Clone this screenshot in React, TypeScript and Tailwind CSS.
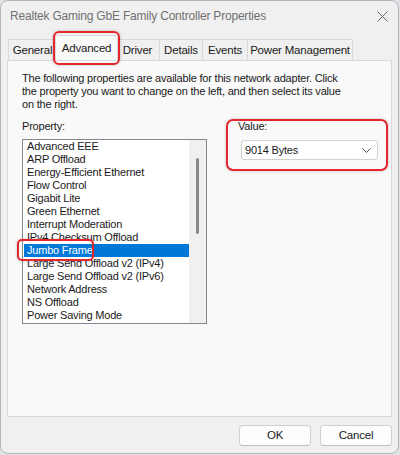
import React from "react";

const items = [
  "Advanced EEE",
  "ARP Offload",
  "Energy-Efficient Ethernet",
  "Flow Control",
  "Gigabit Lite",
  "Green Ethernet",
  "Interrupt Moderation",
  "IPv4 Checksum Offload",
  "Jumbo Frame",
  "Large Send Offload v2 (IPv4)",
  "Large Send Offload v2 (IPv6)",
  "Network Address",
  "NS Offload",
  "Power Saving Mode",
];

function Tab({ label, w, selected }: { label: string; w: string; selected?: boolean }) {
  if (selected) {
    return (
      <div className="relative -mx-[2px] z-10 flex h-[25px] w-[63px] items-start justify-center border border-b-0 border-[#d9d9d9] bg-[#f9f9f9] pt-[4px] text-[11.5px] tracking-[-0.2px] text-[#1a1a1a]">
        {label}
        <div className="pointer-events-none absolute -left-[3px] -top-[5px] h-[34px] w-[67px] rounded-[6px] border-2 border-[#e5262d] shadow-[0_0_3px_rgba(0,0,0,0.25)]" />
      </div>
    );
  }
  return (
    <div className={`-ml-px flex h-[21px] ${w} items-center justify-center border border-b-0 border-[#d9d9d9] bg-[#f0f0f0] pt-[1px] text-[11.5px] tracking-[-0.2px] text-[#1a1a1a]`}>
      {label}
    </div>
  );
}

export default function App() {
  return (
    <div
      className="h-[455px] w-[400px] bg-[#dfe3e8]"
      style={{ fontFamily: '"Liberation Sans", Arial, sans-serif' }}
    >
      <div className="flex h-[454px] w-[399px] flex-col overflow-hidden rounded-[8px] border border-[#b5b5b5] bg-[#f0f0f0]">
        {/* Title bar */}
        <div className="flex h-[30px] items-center justify-between pl-[9px] pr-[9px]">
          <span className="text-[12px] tracking-[-0.2px] text-[#707070]">Realtek Gaming GbE Family Controller Properties</span>
          <svg width="11" height="11" viewBox="0 0 11 11" className="mr-[1px]">
            <path d="M0.5 0.5 L10.5 10.5 M10.5 0.5 L0.5 10.5" stroke="#6a6a6a" strokeWidth="1" fill="none" />
          </svg>
        </div>

        {/* Tabs */}
        <div className="flex h-[29px] items-end pl-[8px]">
          <Tab label="General" w="w-[49px]" />
          <Tab label="Advanced" w="" selected />
          <Tab label="Driver" w="w-[45px]" />
          <Tab label="Details" w="w-[44px]" />
          <Tab label="Events" w="w-[46px]" />
          <Tab label="Power Management" w="w-[106px]" />
        </div>

        {/* Panel */}
        <div className="ml-[6px] h-[357px] w-[385px] border border-[#d9d9d9] bg-[#f9f9f9] text-[11px] tracking-[-0.2px] text-[#1a1a1a]">
          <p className="whitespace-nowrap pl-[14px] pt-[11px] leading-[13px] tracking-[-0.2px]">
            The following properties are available for this network adapter. Click
            <br />
            the property you want to change on the left, and then select its value
            <br />
            on the right.
          </p>
          <div className="mt-[9px] flex pl-[14px]">
            <div className="w-[185px]">
              <div className="leading-[13px]">Property:</div>
              <div className="relative mt-[6px] flex h-[185px] border border-[#828790] bg-white">
                <div className="flex-1 pl-[1px]">
                  {items.map((it) => (
                    <div
                      key={it}
                      className={`h-[13px] pl-[3px] leading-[13px] ${it === "Jumbo Frame" ? "bg-[#0078d7] text-white" : ""}`}
                    >
                      {it}
                    </div>
                  ))}
                </div>
                <div className="flex w-[17px] justify-center bg-[#f0f0f0] pt-[18px]">
                  <div className="h-[76px] w-[3px] rounded-full bg-[#8a8a8a]" />
                </div>
                <div className="pointer-events-none absolute -left-[6px] top-[99px] h-[22px] w-[77px] rounded-[5px] border-2 border-[#e5262d] shadow-[0_0_3px_rgba(0,0,0,0.25)]" />
              </div>
            </div>
            <div className="relative ml-[31px] w-[140px]">
              <div className="leading-[13px]">Value:</div>
              <div className="ml-[3px] mt-[7px] flex h-[20px] w-[137px] items-center justify-between rounded-[3px] border border-[#d0d0d0] bg-white pl-[3px] pr-[6px]">
                <span>9014 Bytes</span>
                <svg width="9" height="5" viewBox="0 0 9 5">
                  <path d="M0.5 0.5 L4.5 4.5 L8.5 0.5" stroke="#555" strokeWidth="1" fill="none" />
                </svg>
              </div>
              <div className="pointer-events-none absolute -left-[12px] -top-[1px] h-[52px] w-[162px] rounded-[7px] border-2 border-[#e5262d] shadow-[0_0_3px_rgba(0,0,0,0.25)]" />
            </div>
          </div>
        </div>

        {/* Buttons */}
        <div className="mt-[8px] flex justify-end gap-[9px] pr-[6px]">
          <button className="h-[21px] w-[72px] rounded-[4px] border border-[#d0d0d0] border-b-[#bdbdbd] bg-[#fdfdfd] text-[11.5px] tracking-[-0.2px] text-[#1a1a1a]">
            OK
          </button>
          <button className="h-[21px] w-[72px] rounded-[4px] border border-[#d0d0d0] border-b-[#bdbdbd] bg-[#fdfdfd] text-[11.5px] tracking-[-0.2px] text-[#1a1a1a]">
            Cancel
          </button>
        </div>
      </div>
    </div>
  );
}
